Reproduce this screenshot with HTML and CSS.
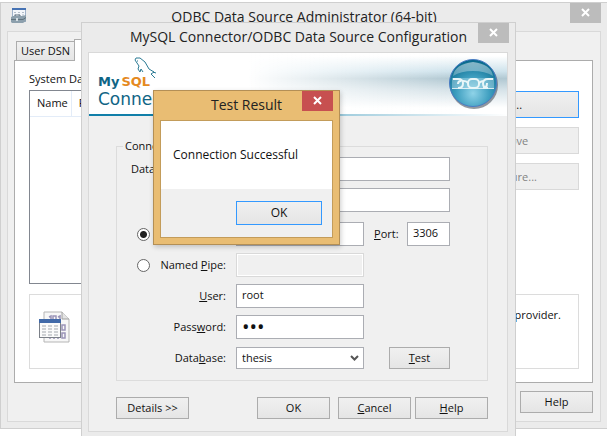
FILE: index.html
```
<!DOCTYPE html>
<html lang="en">
<head>
  <meta charset="utf-8">
  <meta name="viewport" content="width=device-width, initial-scale=1">
  <title>ODBC Data Source Administrator (64-bit)</title>

  <link rel="stylesheet" href="styles.css">

</head>
<body>
  <section class="window admin">
    <header class="titlebar">
      <svg class="app-icon" width="18" height="18" viewBox="0 0 18 18">
        <rect x="2.500" y="0.500" width="13" height="13" fill="#f4f7fb" stroke="#9fb2ca"/>
        <rect x="2" y="0" width="14" height="2" fill="#4773b4"/>
        <path d="M4 4.500h2M8 4.500h2M12 4.500h2M4 7h2M8 7h2M12 7h2" stroke="#b3bdc9"/>
        <path d="M5 9V7h5v2" fill="none" stroke="#5d6f7c"/>
        <path d="M1 9l2-1h9l4-1v6l-3 2H2l-1-1z" fill="#8da0ad"/>
        <path d="M1 11.500h12l3-2" fill="none" stroke="#62747f"/>
        <path d="M6 10h2v3H6z" fill="#d5dee3"/>
      </svg>
      <h1 class="title">ODBC Data Source Administrator (64-bit)</h1>
      <button class="close" type="button" aria-label="Close">
        <svg width="9" height="9" viewBox="0 0 9 9"><path d="M1 1l7 7M8 1l-7 7"/></svg>
      </button>
    </header>

    <div class="frame">
      <nav class="tabs">
        <button class="tab" type="button">User DSN</button>
        <button class="tab active" type="button" aria-label="System DSN"></button>
      </nav>

      <div class="tab-page">
        <p class="list-title">System Data</p>
        <div class="sources">
          <div class="list">
            <table>
              <thead>
                <tr><th>Name</th><th>P</th></tr>
              </thead>
            </table>
          </div>
          <div class="actions">
            <button class="default" type="button">Add...</button>
            <button type="button" disabled>Remove</button>
            <button type="button" disabled>Configure...</button>
          </div>
        </div>
        <div class="info">
          <svg width="32" height="34" viewBox="0 0 32 34">
            <path d="M6 1h18l7 7v23H6z" fill="#f7f7f7" stroke="#b5b5b5"/>
            <path d="M24 1v7h7" fill="#e4e4e4" stroke="#a0a0a0"/>
            <g fill="none" stroke="#9a94b8" stroke-width="1.500">
              <path d="M11 6l2-1v5M20 6l2-1v5"/>
              <rect x="15" y="5" width="3" height="5"/>
              <rect x="24" y="14" width="3" height="5"/>
              <rect x="24" y="22" width="3" height="5"/>
              <path d="M12 24v4M16 24v4M20 24v4"/>
            </g>
            <rect x="1.500" y="8.500" width="21" height="18" fill="#fafafa" stroke="#7b8088"/>
            <rect x="1" y="8" width="22" height="4" fill="#4169a8"/>
            <path d="M4 15h4M10 15h4M16 15h4M4 18h4M10 18h4M16 18h4M4 21h4M10 21h4M16 21h4M4 24h4M10 24h4M16 24h4" stroke="#a3a8ae"/>
          </svg>
          <p>data provider.</p>
        </div>
      </div>

      <footer class="admin-footer">
        <button type="button">Help</button>
      </footer>
    </div>
  </section>

  <section class="window config">
    <header class="titlebar">
      <h2 class="title">MySQL Connector/ODBC Data Source Configuration</h2>
      <button class="close" type="button" aria-label="Close">
        <svg width="9" height="9" viewBox="0 0 9 9"><path d="M1 1l7 7M8 1l-7 7"/></svg>
      </button>
    </header>

    <form class="frame">
      <div class="banner">
        <div class="logo">
          <svg class="dolphin" width="24" height="22" viewBox="0 0 24 22">
            <path d="M6 15L4 12 5 9 1 3 2 1 6 1 11 5 15 12 20 15 17 17 21 21M6 15l1-3 2 3M3 4h1M19 15l3 1" fill="none" stroke="#2b7a94"/>
          </svg>
          <p class="brand">My<span>SQL</span></p>
          <p class="product">Connec</p>
        </div>
        <svg class="orb" width="52" height="54" viewBox="0 0 52 54">
          <defs>
            <radialGradient id="orb-fill" cx="50%" cy="72%" r="70%">
              <stop offset="0" stop-color="#8fd3e8"/>
              <stop offset="0.500" stop-color="#3f9fc0"/>
              <stop offset="1" stop-color="#08698c"/>
            </radialGradient>
            <linearGradient id="orb-shine" x1="0" y1="0" x2="0" y2="1">
              <stop offset="0" stop-color="#fff" stop-opacity="0.500"/>
              <stop offset="1" stop-color="#fff" stop-opacity="0.250"/>
            </linearGradient>
          </defs>
          <circle cx="27" cy="28" r="24" fill="#3d4650" opacity="0.550"/>
          <circle cx="26" cy="26" r="23.500" fill="url(#orb-fill)" stroke="#4a7cc4"/>
          <path d="M6 19q2-12 20-14 18 2 20 14-8-5-20-5T6 19z" fill="url(#orb-shine)"/>
          <path d="M5 21h42v10H5z" fill="#d9f1f7" opacity="0.350"/>
          <path d="M5 31.500h42" stroke="#fff" opacity="0.800"/>
          <g fill="none" stroke="#e9f6f8" stroke-width="2">
            <path d="M6 22h5q5 0 5 4.500t-5 4.500"/>
            <rect x="21" y="22" width="11" height="9" rx="4"/>
            <path d="M46 22h-5q-5 0-5 4.500t5 4.500"/>
            <path d="M11 27q0-3 3-3M16 24q4 0 5 2M32 26q2-2 5-2M40 26q0 5-4 5"/>
          </g>
        </svg>
      </div>

      <div class="form-body">
        <fieldset>
          <legend>Connec</legend>
          <div class="rows">
            <div class="row">
              <label class="cut" for="dsn">Data</label>
              <input id="dsn" class="wide" type="text">
            </div>
            <div class="row">
              <label for="description"></label>
              <input id="description" class="wide" type="text" aria-label="Description">
            </div>
            <div class="row first-choice">
              <div class="choice">
                <input id="use-tcp" type="radio" name="transport" aria-label="TCP/IP Server" checked>
              </div>
              <input type="text" aria-label="Server">
              <label class="port-label" for="port"><u>P</u>ort:</label>
              <input id="port" class="port" type="text" value="3306">
            </div>
            <div class="row">
              <div class="choice">
                <input id="use-pipe" type="radio" name="transport">
                <label for="use-pipe">Named <u>P</u>ipe:</label>
              </div>
              <input type="text" aria-label="Pipe name" disabled>
            </div>
            <div class="row">
              <label for="user"><u>U</u>ser:</label>
              <input id="user" type="text" value="root">
            </div>
            <div class="row">
              <label for="password">Pass<u>w</u>ord:</label>
              <input id="password" type="password" value="abc">
            </div>
            <div class="row">
              <label for="database">Data<u>b</u>ase:</label>
              <div class="dropdown">
                <select id="database">
                  <option>thesis</option>
                </select>
                <svg width="9" height="7" viewBox="0 0 9 7"><path d="M1 1l3.500 3.500L8 1"/></svg>
              </div>
              <button class="test" type="button"><u>T</u>est</button>
            </div>
          </div>
        </fieldset>

        <footer class="form-footer">
          <button class="details" type="button">Details &gt;&gt;</button>
          <button type="button">OK</button>
          <button type="button"><u>C</u>ancel</button>
          <button class="help" type="button"><u>H</u>elp</button>
        </footer>
      </div>
    </form>
  </section>

  <section class="result" role="dialog" aria-labelledby="result-title">
    <header class="titlebar">
      <h2 id="result-title" class="title">Test Result</h2>
      <button class="close" type="button" aria-label="Close">
        <svg width="9" height="9" viewBox="0 0 9 9"><path d="M1 1l7 7M8 1l-7 7"/></svg>
      </button>
    </header>
    <div class="result-body">
      <p>Connection Successful</p>
      <footer>
        <button class="default" type="button">OK</button>
      </footer>
    </div>
  </section>
</body>
</html>
```
FILE: styles.css
```
* {
  box-sizing: border-box;
  margin: 0;
  padding: 0;
}

body {
  position: relative;
  height: 100vh;
  overflow: hidden;
  background: #fff;
  color: #111;
  font: 11px/16px "Open Sans", "Noto Sans", sans-serif;
}

button,
input,
select {
  font: inherit;
  color: inherit;
}

button {
  height: 22px;
  border: 1px solid #acacac;
  background: linear-gradient(#f0f0f0, #e5e5e5);
}
button:disabled {
  border-color: #d9d9d9;
  background: #efefef;
  color: #838383;
}
button.default {
  border-color: #3399ff;
}

/* windows */
.window {
  position: absolute;
  isolation: isolate;
  display: flex;
  flex-direction: column;
  border: 1px solid #cfcfcf;
  background: #ebebeb;
}
.titlebar {
  display: flex;
  justify-content: center;
  position: relative;
}
.title {
  font-size: 14px;
  font-weight: normal;
  line-height: 28px;
  color: #222;
  white-space: nowrap;
}
.close {
  position: absolute;
  top: 0;
  right: 6px;
  width: 31px;
  height: 20px;
  border: 0;
  background: #bcbcbc;
}
.close path {
  fill: none;
  stroke: #fff;
  stroke-width: 2;
}
.frame {
  border: 1px solid #d9d9d9;
  background: #f0f0f0;
}

/* administrator */
.admin {
  top: 2px;
  left: 0;
  right: -1px;
  height: 427px;
}
.admin .frame {
  display: flex;
  flex-direction: column;
  flex: 1;
  margin: 0 6px 6px;
  padding: 7px 7px 8px 6px;
}
.app-icon {
  position: absolute;
  top: 5px;
  left: 9px;
}
.tabs {
  display: flex;
  align-items: flex-end;
  padding-left: 2px;
  height: 21px;
}
.tab {
  width: 59px;
  height: 19px;
  border-bottom: 0;
  line-height: 18px;
}
.tab.active {
  width: 84px;
  height: 22px;
  margin: 0 0 -1px -1px;
  z-index: 1;
  background: #fff;
}
.tab-page {
  display: flex;
  flex-direction: column;
  flex: 1;
  padding: 10px 13px 13px 14px;
  border: 1px solid #acacac;
  background: #fff;
}
.list-title {
  margin-bottom: 3px;
}
.sources {
  display: flex;
  gap: 10px;
  flex: 1;
}
.list {
  flex: 1;
  border: 1px solid #828790;
}
.list table {
  border-collapse: collapse;
}
.list th {
  height: 25px;
  padding: 0 3px 0 7px;
  border-right: 1px solid #e3ecf8;
  border-bottom: 1px solid #e3ecf8;
  font-weight: normal;
  text-align: left;
}
.actions {
  display: flex;
  flex-direction: column;
  gap: 9px;
  width: 143px;
  padding-top: 1px;
}
.actions button {
  height: 27px;
}
.info {
  display: flex;
  justify-content: space-between;
  height: 75px;
  margin-top: 10px;
  padding: 12px 17px 12px 8px;
  border: 1px solid #dcdcdc;
}
.info svg {
  margin-top: 4px;
}
.admin-footer {
  display: flex;
  justify-content: flex-end;
  margin-top: 8px;
}
.admin-footer button {
  width: 73px;
}

/* connector configuration */
.config {
  top: 22px;
  left: 81px;
  right: 91px;
  height: 420px;
}
.config .frame {
  display: flex;
  flex-direction: column;
  margin: 1px 7px 10px 6px;
}
.banner {
  display: flex;
  justify-content: space-between;
  height: 63px;
  border-bottom: 2px solid;
  border-image: linear-gradient(to right, #117fa9 35%, #a5cfdf 62%, #fff) 1;
  background:
    linear-gradient(to right, #fff 38%, transparent 88%),
    linear-gradient(#fff 5%, #cfe3ec 30%, #b1c8d2 42%, #d5e2e8 60%, #fff 90%);
}
.logo {
  padding: 4px 0 0 9px;
}
.dolphin {
  display: block;
  margin: 0 0 -5px 36px;
}
.brand {
  font: bold 13px/15px "DejaVu Sans", sans-serif;
  color: #106585;
}
.brand span {
  margin-left: 2px;
  color: #e58a1f;
}
.product {
  font: 17px/20px "DejaVu Sans", sans-serif;
  color: #106585;
}
.orb {
  margin: 4px 8px 0 0;
}
.form-body {
  padding: 22px 19px 12px 27px;
}
fieldset {
  padding: 0 37px 10px 6px;
  border: 1px solid #dcdcdc;
}
legend {
  padding: 0 2px;
}
.rows {
  display: flex;
  flex-direction: column;
  gap: 7px;
  padding: 3px 0 0 8px;
}
.row {
  display: flex;
  align-items: center;
  height: 24px;
}
.row > label:first-child,
.choice {
  width: 95px;
  margin-right: 10px;
  text-align: right;
  white-space: nowrap;
}
.row > label.cut {
  text-align: left;
}
.first-choice {
  margin-top: 3px;
}
.choice {
  display: flex;
  align-items: center;
  justify-content: space-between;
}
.choice input {
  appearance: none;
  width: 13px;
  height: 13px;
  margin-left: 6px;
  border: 1px solid #666;
  border-radius: 50%;
  background: #fff;
}
.choice input:checked {
  background: radial-gradient(circle, #222 3px, #fff 4px);
}
.row > input,
.dropdown {
  width: 128px;
  height: 24px;
  padding: 0 5px 4px;
  border: 1px solid #abadb3;
  background: #fff;
}
.row > input.wide {
  flex: 1;
  width: auto;
}
.row > input:disabled {
  border-color: #d9d9d9;
  background: #f0f0f0;
  box-shadow: inset 0 0 0 1px #fff;
}
.row > .port-label {
  width: 33px;
  margin-left: 10px;
}
.row > .port {
  width: 43px;
}
.row > input[type="password"] {
  padding-bottom: 2px;
  font-size: 20px;
}
.dropdown {
  display: flex;
  align-items: center;
  height: 22px;
  padding: 0 4px 0 5px;
}
.dropdown select {
  flex: 1;
  appearance: none;
  border: 0;
  background: none;
}
.dropdown path {
  fill: none;
  stroke: #555;
  stroke-width: 2;
}
.test {
  width: 61px;
  margin-left: 25px;
}
.form-footer {
  display: flex;
  gap: 8px;
  margin-top: 16px;
}
.form-footer button {
  width: 73px;
}
.form-footer .details {
  margin-right: auto;
}
.form-footer .help {
  margin-left: -4px;
}

/* test result */
.result {
  position: absolute;
  top: 90px;
  left: 153px;
  width: 187px;
  padding: 0 6px 6px;
  border: 1px solid #b38f56;
  background: #e9bd73;
  box-shadow: 1px 2px 5px rgba(0, 0, 0, 0.2);
  font-size: 12px;
}
.result .close {
  right: 0;
  background: #c75050;
}
.result-body {
  margin-top: 1px;
  border: 1px solid #c39c5a;
  background: #fff;
}
.result-body p {
  padding: 26px 12px;
  white-space: nowrap;
}
.result-body footer {
  display: flex;
  justify-content: flex-end;
  padding: 12px 10px 12px 9px;
  background: #f0f0f0;
}
.result-body button {
  width: 86px;
  height: 24px;
}
```
